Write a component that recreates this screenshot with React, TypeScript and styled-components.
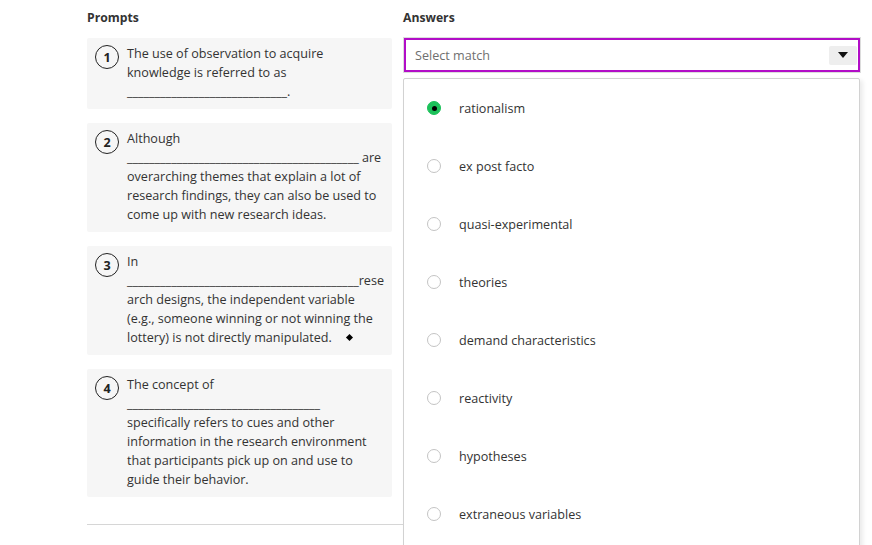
import type { ReactNode } from "react"
import { createGlobalStyle, styled } from "styled-components"

const GlobalStyle = createGlobalStyle`
    html {
        overflow: hidden;
    }
    html, body {
        margin: 0;
        padding: 0;
        background: #ffffff;
    }
    body {
        font-family: "Open Sans", "Liberation Sans", sans-serif;
        font-size: 12.6px;
        color: #333333;
    }
`

const Page = styled.main`
    min-height: 100vh;
    padding: 8px 12px 0 87px;
`

const Columns = styled.div`
    display: grid;
    grid-template-columns: 305px 457px;
    column-gap: 11px;
    padding-bottom: 27px;
    border-bottom: 1px solid #d6d6d6;
    width: 773px;
`

const Column = styled.section`
    position: relative;
    display: flex;
    flex-direction: column;
`

const Heading = styled.h2`
    margin: 0 0 11px;
    font-size: 12.2px;
    font-weight: 700;
    line-height: 19px;
    color: #333333;
`

const PromptList = styled.div`
    display: flex;
    flex-direction: column;
    gap: 14px;
`

const Card = styled.article`
    display: flex;
    align-items: flex-start;
    gap: 8px;
    padding: 6px 10px 8px 8px;
    background: #f6f6f6;
    border-radius: 2px;
`

const Num = styled.span`
    flex: none;
    display: flex;
    align-items: center;
    justify-content: center;
    width: 22px;
    height: 22px;
    margin-top: 1px;
    border: 1.5px solid #222222;
    border-radius: 50%;
    font-size: 12.6px;
    font-weight: 700;
    color: #222222;
`

const PromptText = styled.p`
    margin: 0;
    flex: 1;
    line-height: 19px;
    overflow-wrap: break-word;
`

const Marker = styled.span`
    display: inline-block;
    width: 5px;
    height: 5px;
    margin-left: 15px;
    background: #000000;
    transform: rotate(45deg);
    vertical-align: 2px;
`

const Select = styled.div`
    display: flex;
    align-items: center;
    justify-content: space-between;
    height: 30px;
    margin-left: 1px;
    padding: 0 1px 0 9px;
    border: 2px solid #b20dc7;
    box-shadow: 0 0 0 1px #dcdcdc;
    background: #ffffff;
`

const Placeholder = styled.span`
    color: #6f6f6f;
    font-size: 12.6px;
`

const ArrowButton = styled.span`
    display: flex;
    align-items: center;
    justify-content: center;
    width: 28px;
    height: 19px;
    background: #eeeeee;
    border-radius: 2px;
`

const Menu = styled.ul`
    position: absolute;
    top: 70px;
    left: 0;
    right: 0;
    margin: 0;
    padding: 0 0 20px;
    list-style: none;
    background: #ffffff;
    border: 1px solid #d2d2d2;
    border-radius: 2px;
    box-shadow: 3px 2px 4px rgba(0, 0, 0, 0.08);
`

const Option = styled.li`
    display: flex;
    align-items: center;
    gap: 18px;
    height: 58px;
    padding-left: 23px;
    font-size: 12.6px;
    color: #333333;
`

const Radio = styled.span<{ $checked?: boolean }>`
    flex: none;
    display: flex;
    align-items: center;
    justify-content: center;
    width: 14px;
    height: 14px;
    box-sizing: border-box;
    border-radius: 50%;
    border: 1px solid ${({ $checked }) => $checked ? "#1cc15a" : "#c4c4c4"};
    background: ${({ $checked }) => $checked ? "#1cc15a" : "#ffffff"};

    &::after {
        content: "";
        display: ${({ $checked }) => $checked ? "block" : "none"};
        width: 5px;
        height: 5px;
        border-radius: 50%;
        background: #000000;
    }
`

interface Prompt {
    num: number,
    content: ReactNode,
}

const prompts: Prompt[] = [
    {
        num: 1,
        content: <>The use of observation to acquire knowledge is referred to as {"_".repeat(29)}.</>,
    },
    {
        num: 2,
        content: <>Although {"_".repeat(42)} are overarching themes that explain a lot of research findings, they can also be used to come up with new research ideas.</>,
    },
    {
        num: 3,
        content: <>In<br />{"_".repeat(42)}rese<br />arch designs, the independent variable (e.g., someone winning or not winning the lottery) is not directly manipulated.<Marker /></>,
    },
    {
        num: 4,
        content: <>The concept of {"_".repeat(35)}<br />specifically refers to cues and other information in the research environment that participants pick up on and use to guide their behavior.</>,
    },
]

const answers = [
    "rationalism",
    "ex post facto",
    "quasi-experimental",
    "theories",
    "demand characteristics",
    "reactivity",
    "hypotheses",
    "extraneous variables",
]

const App = () => {
    return (
        <>
            <GlobalStyle />
            <Page>
                <Columns>
                    <Column>
                        <Heading>Prompts</Heading>
                        <PromptList>
                            {prompts.map((p) => (
                                <Card key={p.num}>
                                    <Num>{p.num}</Num>
                                    <PromptText>{p.content}</PromptText>
                                </Card>
                            ))}
                        </PromptList>
                    </Column>

                    <Column>
                        <Heading>Answers</Heading>
                        <Select>
                            <Placeholder>Select match</Placeholder>
                            <ArrowButton>
                                <svg width="10" height="6" viewBox="0 0 10 6">
                                    <path d="M0 0 H10 L5 6 Z" fill="#111111" />
                                </svg>
                            </ArrowButton>
                        </Select>
                        <Menu>
                            {answers.map((a, i) => (
                                <Option key={a}>
                                    <Radio $checked={i === 0} />
                                    {a}
                                </Option>
                            ))}
                        </Menu>
                    </Column>
                </Columns>
            </Page>
        </>
    )
}

export default App
